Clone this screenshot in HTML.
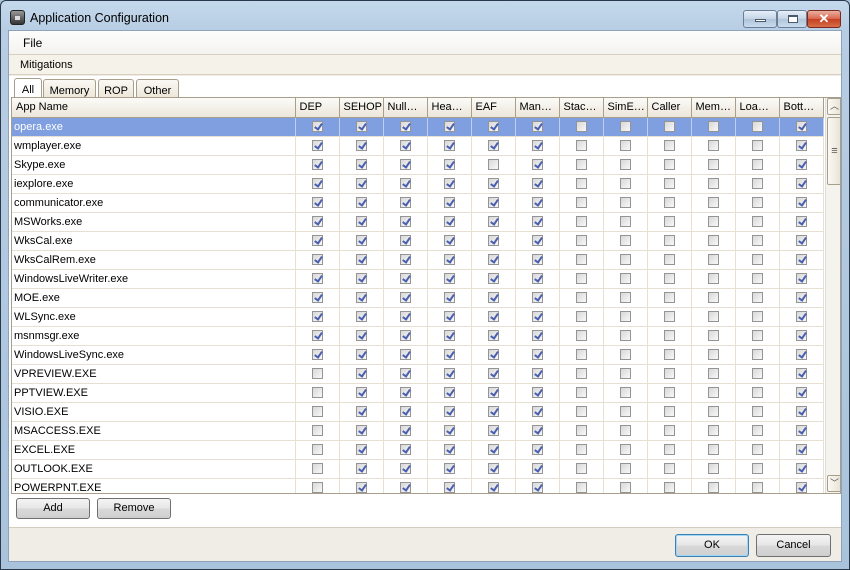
<!DOCTYPE html>
<html><head><meta charset="utf-8"><style>
*{box-sizing:border-box;margin:0;padding:0}
body{width:850px;height:570px;overflow:hidden;font-family:"Liberation Sans",sans-serif;font-size:11px;color:#000;background:#aac4dc;position:relative}
.frame{position:absolute;left:0;top:0;width:850px;height:570px;border:1px solid #2a3a4a;border-radius:6px 6px 0 0;background:linear-gradient(180deg,#c5d9ec 0,#b7cde3 30px,#a9c3dc 100%)}
.title{position:absolute;left:30px;top:11px;font-size:12.5px;color:#000}
.ico{position:absolute;left:10px;top:10px;width:15px;height:15px;border-radius:3px;background:linear-gradient(#999,#333);border:1px solid #222}
.ico:after{content:"";position:absolute;left:4px;top:5px;width:5px;height:4px;background:#ddd}
.wb{position:absolute;top:10px;height:18px;border:1px solid #6a7f96;border-radius:3px;background:linear-gradient(#e7eff8,#c3d3e5 50%,#b0c4da 51%,#c9dbee)}
.client{position:absolute;left:8px;top:30px;width:834px;height:532px;background:#f0ede6;border:1px solid #8ea3ba}
.menu{position:absolute;left:0;top:0;width:832px;height:24px;background:linear-gradient(#fdfdfd,#f4f3ef);border-bottom:1px solid #d8cfc0}
.mit{position:absolute;left:0;top:24px;width:832px;height:20px;background:#f5f2e9;border-bottom:1px solid #d8cfc0}
.panel{position:absolute;left:0;top:45px;width:832px;height:452px;background:#fff;border-bottom:1px solid #d5cdbf}
.tab{position:absolute;top:3px;height:20px;border:1px solid #a89e8c;border-bottom:none;border-radius:3px 3px 0 0;background:linear-gradient(#fbf9f4,#ece5d7);padding:5px 0 0;text-align:center}
.grid{position:absolute;left:2px;top:21px;width:830px;height:397px;border:1px solid #a89e8c;overflow:hidden}
table{border-collapse:collapse;table-layout:fixed;position:absolute;left:0;top:0}
th{height:19px;background:linear-gradient(#fcfbf8,#ece6da);border-right:1px solid #a89e8c;border-bottom:1px solid #a89e8c;font-weight:normal;text-align:left;padding-left:4px;white-space:nowrap;overflow:hidden}
td{height:19px;border-right:1px solid #e6dfd2;border-bottom:1px solid #e6dfd2;padding-left:2px;white-space:nowrap}
td.c{text-align:center;padding:0}
tr.sel td{background:#7f9fe0;color:#fff;border-right-color:#c0cff0}
.cb{display:inline-block;width:11px;height:11px;border:1px solid #949494;background:linear-gradient(135deg,#d8d8d8,#f8f8f8);vertical-align:middle;position:relative}
.cb.k:after{content:"";position:absolute;left:3px;top:0px;width:3px;height:6px;border:solid #4a5fb0;border-width:0 2px 2px 0;transform:rotate(35deg)}
.sb{position:absolute;left:813px;top:0;width:16px;height:395px;background:#f5f3ee;border-left:1px solid #ddd}
.sbb{position:absolute;left:1px;width:15px;height:17px;border:1px solid #a89e8c;border-radius:2px;background:linear-gradient(90deg,#fbf9f4,#e9e2d4);text-align:center;font-size:9px;color:#555;line-height:15px}
.btn{position:absolute;height:21px;border:1px solid #707070;border-radius:3px;background:linear-gradient(#f4f4f4,#e6e6e6 50%,#d9d9d9 51%,#cfcfcf);text-align:center;line-height:19px;font-size:11px}
</style></head><body>
<div class="frame"></div>
<div class="ico"></div>
<div class="title">Application Configuration</div>
<div class="wb" style="left:743px;width:34px"><div style="position:absolute;left:11px;top:8px;width:11px;height:3px;background:#fff;border:1px solid #4a5a6a"></div></div>
<div class="wb" style="left:777px;width:30px"><div style="position:absolute;left:10px;top:4px;width:10px;height:8px;border:1px solid #4a5a6a;border-top-width:2px;background:#fff"></div></div>
<div class="wb" style="left:807px;width:34px;border-color:#7a2a20;background:linear-gradient(#eab0a0,#d8644c 50%,#c33f22 51%,#d86e48);color:#fff;font-weight:bold;text-align:center;font-size:13px;line-height:16px">✕</div>
<div class="client">
 <div class="menu"><span style="position:absolute;left:14px;top:5px;font-size:12px">File</span></div>
 <div class="mit"><span style="position:absolute;left:11px;top:4px">Mitigations</span></div>
 <div class="panel">
  <div class="tab" style="left:5px;width:28px;background:#fff;height:21px;top:2px">All</div>
  <div class="tab" style="left:34px;width:53px">Memory</div>
  <div class="tab" style="left:89px;width:36px">ROP</div>
  <div class="tab" style="left:127px;width:43px">Other</div>
  <div class="grid">
   <table id="t"></table>
   <div class="sb"><div class="sbb" style="top:0">︿</div><div class="sbb" style="top:19px;height:68px;line-height:66px;font-size:11px">≡</div><div class="sbb" style="top:377px">﹀</div></div>
  </div>
  <div class="btn" style="left:7px;top:422px;width:74px">Add</div>
  <div class="btn" style="left:88px;top:422px;width:74px">Remove</div>
 </div>
 <div class="btn" style="left:666px;top:503px;width:74px;height:23px;line-height:21px;border-color:#3c7fb1;box-shadow:inset 0 0 0 1px #9fd7f7">OK</div>
 <div class="btn" style="left:747px;top:503px;width:75px;height:23px;line-height:21px">Cancel</div>
</div>
<script>
var h=["DEP","SEHOP","Null…","Hea…","EAF","Man…","Stac…","SimE…","Caller","Mem…","Loa…","Bott…"];
var n=["opera.exe","wmplayer.exe","Skype.exe","iexplore.exe","communicator.exe","MSWorks.exe","WksCal.exe","WksCalRem.exe","WindowsLiveWriter.exe","MOE.exe","WLSync.exe","msnmsgr.exe","WindowsLiveSync.exe","VPREVIEW.EXE","PPTVIEW.EXE","VISIO.EXE","MSACCESS.EXE","EXCEL.EXE","OUTLOOK.EXE","POWERPNT.EXE"];
var s='<colgroup><col style="width:283px">'+h.map(()=>'<col style="width:44px">').join('')+'</colgroup><tr><th>App Name</th>'+h.map(x=>'<th>'+x+'</th>').join('')+'</tr>';
n.forEach(function(a,i){var v=[1,1,1,1,1,1,0,0,0,0,0,1];if(i==2)v[4]=0;if(i>=13)v[0]=0;
s+='<tr'+(i==0?' class="sel"':'')+'><td>'+a+'</td>'+v.map(k=>'<td class="c"><span class="cb'+(k?' k':'')+'"></span></td>').join('')+'</tr>';});
document.getElementById('t').innerHTML=s;
</script>
</body></html>
